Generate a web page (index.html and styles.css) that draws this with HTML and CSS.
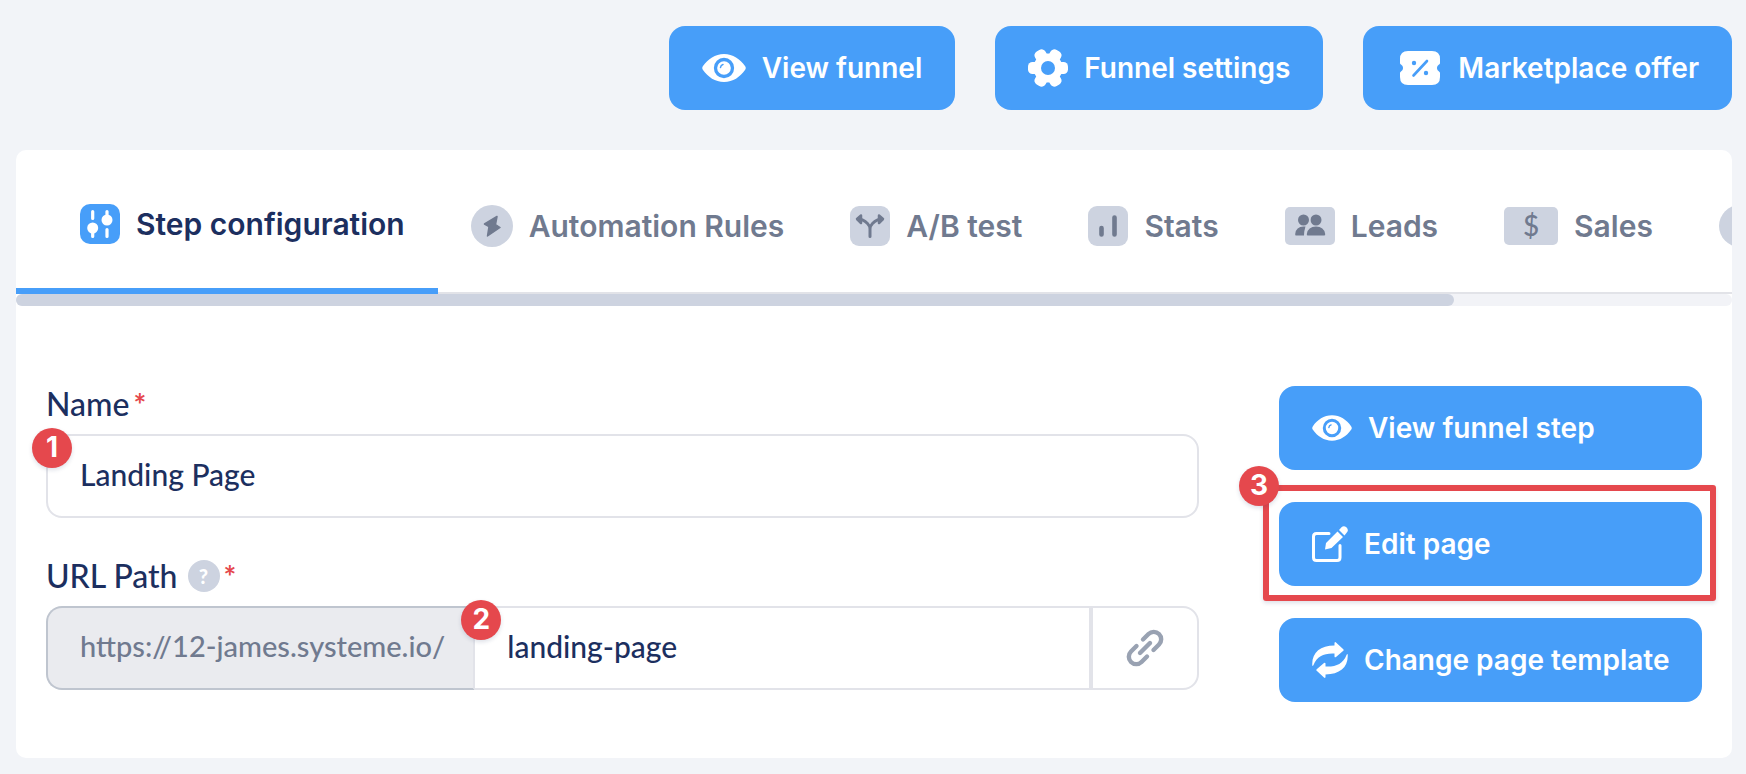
FILE: index.html
```html
<!DOCTYPE html>
<html lang="en">
<head>
  <meta charset="utf-8">
  <title>Step configuration</title>
  <link rel="stylesheet" href="styles.css">
</head>
<body>
  <header class="toolbar">
    <button class="btn" type="button">
      <svg width="44" height="28" viewBox="0 0 44 28">
        <path fill="#fff" d="M1 12C6 5 13 0 22 0s16 5 21 12q1.500 2 0 4C38 23 31 28 22 28S6 23 1 16q-1.500-2 0-4z"/>
        <circle cx="22" cy="14" r="8.500" fill="#fff" stroke="#479ef9" stroke-width="3.300"/>
        <path d="M18.500 13.500q.3-2.500 2.500-3" fill="none" stroke="#479ef9" stroke-width="1.500" stroke-linecap="round"/>
      </svg>
      View funnel
    </button>
    <button class="btn" type="button">
      <svg width="40" height="40" viewBox="0 0 40 40">
        <g fill="#fff">
          <circle cx="20" cy="20" r="14.500"/>
          <rect y="14" width="40" height="12" rx="4.500"/>
          <rect y="14" width="40" height="12" rx="4.500" transform="rotate(60 20 20)"/>
          <rect y="14" width="40" height="12" rx="4.500" transform="rotate(120 20 20)"/>
        </g>
        <circle cx="20" cy="20" r="7" fill="#479ef9"/>
      </svg>
      Funnel settings
    </button>
    <button class="btn" type="button">
      <svg width="46" height="34" viewBox="-4 0 46 34">
        <path fill="#fff" d="M8 0h24q8 0 8 8v4q0 1-1 1.500a4 4 0 0 0 0 7q1 .5 1 1.500v4q0 8-8 8H8q-8 0-8-8v-4q0-1 1-1.500a4 4 0 0 0 0-7Q0 13 0 12V8q0-8 8-8z"/>
        <g fill="#479ef9">
          <circle cx="14" cy="12" r="2.200"/>
          <circle cx="26" cy="22" r="2.200"/>
        </g>
        <path d="M27 10 13.500 24.500" stroke="#479ef9" stroke-width="2.600" stroke-linecap="round"/>
      </svg>
      Marketplace offer
    </button>
  </header>

  <main class="card">
    <nav class="tabs">
      <a class="tab active" href="#">
        <svg width="40" height="40" viewBox="0 0 40 40">
          <rect width="40" height="40" rx="10" fill="#479ef9"/>
          <path d="M12.700 7.500v7M12.700 24v8.500M27 7.500V16M27 25.500v7" stroke="#fff" stroke-width="3.200" stroke-linecap="round"/>
          <circle cx="12.700" cy="24" r="5.500" fill="#fff"/>
          <circle cx="27" cy="16" r="5.500" fill="#fff"/>
        </svg>
        Step configuration
      </a>
      <a class="tab" href="#">
        <svg width="42" height="42" viewBox="0 0 42 42">
          <circle cx="21" cy="21" r="21" fill="#cdd3e0"/>
          <path d="M26 11.500 13.500 19l4.500 2.500L16.500 31 29 22.500 24.500 19.500z" fill="#707a8f" stroke="#707a8f" stroke-width="1.500" stroke-linejoin="round"/>
        </svg>
        Automation Rules
      </a>
      <a class="tab" href="#">
        <svg width="40" height="40" viewBox="0 0 40 40">
          <rect width="40" height="40" rx="9" fill="#cdd3e0"/>
          <path d="M20 30.500V23q0-3-2.500-5.500Q13 13 8 13M20 23q0-3 2.500-5.500Q27 13 32 13" fill="none" stroke="#707a8f" stroke-width="3" stroke-linecap="round"/>
          <path d="M11 9.500 7 13l4 4zM29 9.500l4 3.500-4 4z" fill="#707a8f" stroke="#707a8f" stroke-width="2.500" stroke-linejoin="round"/>
        </svg>
        A/B test
      </a>
      <a class="tab" href="#">
        <svg width="40" height="40" viewBox="0 0 40 40">
          <rect width="40" height="40" rx="9" fill="#cdd3e0"/>
          <path d="M13.500 22v6.500M26.500 11.500v17" stroke="#707a8f" stroke-width="4.600" stroke-linecap="round"/>
        </svg>
        Stats
      </a>
      <a class="tab" href="#">
        <svg width="50" height="38" viewBox="0 0 50 38">
          <rect width="50" height="38" rx="5" fill="#cdd3e0"/>
          <g fill="#707a8f">
            <circle cx="18.500" cy="13" r="5.500"/>
            <circle cx="31" cy="13" r="5.500"/>
            <path d="M11 28.500q-1 0-.8-1.500Q11 19.500 18.500 19.500h2Q19 24 19 28.500z"/>
            <path d="M23 28.500q-1.500 0-1.200-1.500Q23 19.500 31 19.500t9.200 7.500q.3 1.500-1.200 1.500z"/>
          </g>
          <path d="M24.800 8v10M21.500 19.500Q20 24 20 29" stroke="#cdd3e0" fill="none"/>
        </svg>
        Leads
      </a>
      <a class="tab" href="#">
        <svg width="54" height="38" viewBox="0 0 54 38">
          <rect width="54" height="38" rx="5" fill="#cdd3e0"/>
          <text class="dollar" x="27" y="29" text-anchor="middle">$</text>
        </svg>
        Sales
      </a>
      <a class="tab" href="#" aria-label="More">
        <svg width="42" height="42" viewBox="0 0 42 42">
          <circle cx="21" cy="21" r="21" fill="#cdd3e0"/>
        </svg>
      </a>
    </nav>
    <div class="scroll-track">
      <div class="scroll-thumb"></div>
    </div>

    <div class="content">
      <form class="form">
        <div class="field">
          <div class="field-label">
            <label for="name">Name</label><span class="required">*</span>
          </div>
          <input class="control" type="text" id="name" value="Landing Page">
          <span class="badge badge-corner">1</span>
        </div>
        <div class="field">
          <div class="field-label">
            <label for="path">URL Path</label>
            <span class="help">?</span><span class="required">*</span>
          </div>
          <div class="url-group">
            <span class="prefix">https://12-james.systeme.io/<span class="badge badge-edge">2</span></span>
            <input class="control" type="text" id="path" value="landing-page">
            <button class="copy" type="button" aria-label="Copy link">
              <svg width="38" height="38" viewBox="0 0 38 38">
                <g fill="none" stroke="#99a2b2" stroke-width="4.400" stroke-linecap="round">
                  <path d="M17 10.500 22.500 5a7.200 7.200 0 0 1 10.500 10.500L27.500 21"/>
                  <path d="M21 27.500 15.500 33A7.200 7.200 0 0 1 5 22.500L10.500 17"/>
                  <path d="M14 24 24 14"/>
                </g>
              </svg>
            </button>
          </div>
        </div>
      </form>

      <div class="actions">
        <button class="btn" type="button">
          <svg width="40" height="26" viewBox="0 0 44 28">
            <path fill="#fff" d="M1 12C6 5 13 0 22 0s16 5 21 12q1.500 2 0 4C38 23 31 28 22 28S6 23 1 16q-1.500-2 0-4z"/>
            <circle cx="22" cy="14" r="8.500" fill="#fff" stroke="#479ef9" stroke-width="3.300"/>
            <path d="M18.500 13.500q.3-2.500 2.500-3" fill="none" stroke="#479ef9" stroke-width="1.500" stroke-linecap="round"/>
          </svg>
          View funnel step
        </button>
        <div class="highlight">
          <button class="btn" type="button">
            <svg width="36" height="36" viewBox="0 0 36 36">
              <path d="M17 7.500H4.500q-3 0-3 3v21q0 3 3 3H25q3 0 3-3V19.500" fill="none" stroke="#fff" stroke-width="3" stroke-linecap="round"/>
              <path fill="#fff" d="M13 23.500 14 17 25.500 5.500l5.500 5.500L19.500 22zM27 4l2.500-2.800q2.200-2 4.900 0 2.600 2.800.6 5L32.500 9.500z"/>
            </svg>
            Edit page
          </button>
          <span class="badge badge-outer">3</span>
        </div>
        <button class="btn" type="button">
          <svg width="36" height="36" viewBox="0 0 36 36">
            <g fill="#fff">
              <path id="arrow" d="M.3 23.500C-.5 11 8 3.500 22.500 3.500V1q.3-1.500 1.500-.6l7.300 6.800q.8.8 0 1.600L24 15q-1.300.8-1.500-.6v-2.900C12 11 5 14 1.500 23q-.9 1.500-1.200.5z"/>
              <use href="#arrow" transform="rotate(180 18 18)"/>
            </g>
          </svg>
          Change page template
        </button>
      </div>
    </div>
  </main>
</body>
</html>
```
FILE: styles.css
```css
* {
  box-sizing: border-box;
}

body {
  margin: 0;
  padding: 26px 14px 16px 16px;
  background: #f2f4f8;
  color: #1c2f5f;
  font-family: Inter, "Liberation Sans", sans-serif;
  font-size: 28px;
}

svg {
  display: block;
  flex-shrink: 0;
}

.toolbar {
  display: flex;
  justify-content: flex-end;
  gap: 40px;
  margin-bottom: 40px;
}

.btn {
  display: flex;
  align-items: center;
  gap: 16px;
  height: 84px;
  padding: 0 33px;
  border: 0;
  border-radius: 16px;
  background: #479ef9;
  color: #fff;
  font: inherit;
  font-weight: 600;
  white-space: nowrap;
}

.card {
  border-radius: 10px;
  background: #fff;
}

.tabs {
  display: flex;
  height: 144px;
  overflow: hidden;
  box-shadow: inset 0 -2px #e2e3e8;
}

.tab {
  display: flex;
  flex-shrink: 0;
  align-items: center;
  gap: 16px;
  padding: 8px 33px 0;
  color: #707a8f;
  font-size: 30px;
  font-weight: 600;
  text-decoration: none;
}

.tab.active {
  padding-top: 10px;
  padding-left: 64px;
  border-bottom: 6px solid #479ef9;
  color: #1c2f5f;
}

.dollar {
  fill: #707a8f;
  font-family: Lato, sans-serif;
  font-size: 28px;
  font-weight: 500;
}

.scroll-track {
  height: 12px;
  border-radius: 6px;
  background: #f2f3f7;
}

.scroll-thumb {
  width: 83.8%;
  height: 12px;
  border-radius: 6px;
  background: #cdd3e0;
}

.content {
  display: grid;
  grid-template-columns: 1fr 423px;
  gap: 80px;
  padding: 80px 30px 56px;
}

.form {
  display: flex;
  flex-direction: column;
  gap: 40px;
  font-family: Lato, "Liberation Sans", sans-serif;
  font-size: 30px;
  font-weight: 500;
}

.field {
  position: relative;
}

.field-label {
  display: flex;
  align-items: center;
  height: 36px;
  margin-bottom: 12px;
  font-size: 32px;
  line-height: 32px;
}

.required {
  margin-left: 4px;
  color: #e5484d;
  font-size: 30px;
  font-weight: 700;
}

.help {
  width: 32px;
  margin-left: 10px;
  border-radius: 50%;
  background: #cdd3e0;
  color: #fff;
  font-size: 20px;
  font-weight: 900;
  text-align: center;
}

.control {
  display: block;
  width: 100%;
  height: 84px;
  padding: 0 32px 4px;
  border: 2px solid #e2e3e9;
  border-radius: 16px;
  background: #fff;
  color: #1c2f5f;
  font: inherit;
}

.url-group {
  display: flex;
}

.url-group .control {
  flex: 1;
  min-width: 0;
  border-left: 0;
  border-radius: 0;
}

.prefix {
  position: relative;
  height: 84px;
  padding: 0 28px 0 32px;
  border: 2px solid #bfc5cf;
  border-right-color: #e2e3e9;
  border-radius: 16px 0 0 16px;
  background: #eaebef;
  color: #707a8f;
  font-size: 29px;
  line-height: 76px;
}

.copy {
  display: flex;
  align-items: center;
  justify-content: center;
  width: 108px;
  border: 2px solid #e2e3e9;
  border-radius: 0 16px 16px 0;
  background: #fff;
}

.actions {
  display: flex;
  flex-direction: column;
  gap: 32px;
}

.actions .btn {
  width: 100%;
}

.highlight {
  position: relative;
}

/* red frame drawn around the button */
.highlight::before {
  content: "";
  position: absolute;
  inset: -17px -14px -15px -16px;
  border: 6px solid #e5484d;
  border-radius: 3px;
  box-shadow: 0 2px 4px rgba(28, 47, 95, 0.15);
}

.badge {
  position: absolute;
  width: 40px;
  height: 40px;
  border-radius: 50%;
  background: #e5484d;
  box-shadow: 0 2px 4px rgba(28, 47, 95, 0.15);
  color: #fff;
  font-family: Inter, sans-serif;
  font-size: 28px;
  font-weight: 700;
  line-height: 39px;
  text-align: center;
}

.badge-corner {
  top: 42px;
  left: -14px;
}

.badge-edge {
  top: -8px;
  right: -28px;
  z-index: 1;
}

.badge-outer {
  top: -36px;
  left: -40px;
}
```
